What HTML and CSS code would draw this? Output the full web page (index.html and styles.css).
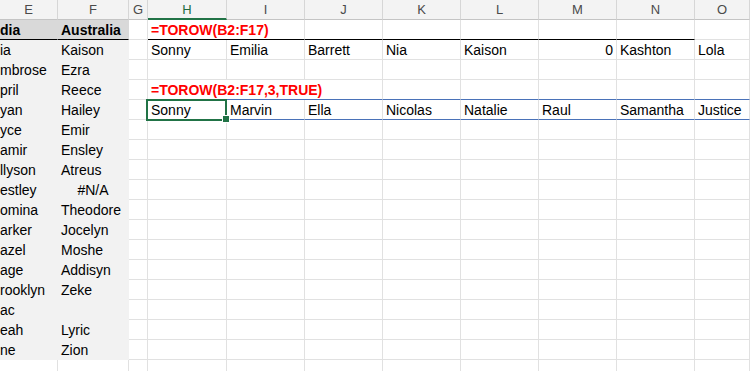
FILE: index.html
```html
<!DOCTYPE html>
<html lang="en">
<head>
<meta charset="utf-8">
<title>TOROW</title>
<link rel="stylesheet" href="styles.css">
</head>
<body>
<div class="sheet">
  <!-- column headers -->
  <div class="h">E</div><div class="h">F</div><div class="h">G</div><div class="h sel">H</div><div class="h">I</div><div class="h">J</div><div class="h">K</div><div class="h">L</div><div class="h">M</div><div class="h">N</div><div class="h">O</div>

  <!-- row 1 -->
  <div class="c t th e">dia</div><div class="c t th">Australia</div><div class="c"></div>
  <div class="c f bk span2">=TOROW(B2:F17)</div><div class="c bk"></div><div class="c bk"></div><div class="c bk"></div><div class="c bk"></div><div class="c bk"></div><div class="c"></div>

  <!-- row 2 -->
  <div class="c t e">ia</div><div class="c t">Kaison</div><div class="c"></div>
  <div class="c">Sonny</div><div class="c">Emilia</div><div class="c">Barrett</div><div class="c">Nia</div><div class="c">Kaison</div><div class="c num">0</div><div class="c">Kashton</div><div class="c">Lola</div>

  <!-- row 3 -->
  <div class="c t e">mbrose</div><div class="c t">Ezra</div><div class="c"></div>
  <div class="c"></div><div class="c"></div><div class="c"></div><div class="c"></div><div class="c"></div><div class="c"></div><div class="c"></div><div class="c"></div>

  <!-- row 4 -->
  <div class="c t e">pril</div><div class="c t">Reece</div><div class="c"></div>
  <div class="c f bl span3">=TOROW(B2:F17,3,TRUE)</div><div class="c bl"></div><div class="c bl"></div><div class="c bl"></div><div class="c bl"></div><div class="c bl"></div>

  <!-- row 5 -->
  <div class="c t e">yan</div><div class="c t">Hailey</div><div class="c"></div>
  <div class="c bl active">Sonny</div><div class="c bl">Marvin</div><div class="c bl">Ella</div><div class="c bl">Nicolas</div><div class="c bl">Natalie</div><div class="c bl">Raul</div><div class="c bl">Samantha</div><div class="c bl">Justice</div>

  <!-- row 6 -->
  <div class="c t e">yce</div><div class="c t">Emir</div><div class="c"></div>
  <div class="c"></div><div class="c"></div><div class="c"></div><div class="c"></div><div class="c"></div><div class="c"></div><div class="c"></div><div class="c"></div>

  <!-- row 7 -->
  <div class="c t e">amir</div><div class="c t">Ensley</div><div class="c"></div>
  <div class="c"></div><div class="c"></div><div class="c"></div><div class="c"></div><div class="c"></div><div class="c"></div><div class="c"></div><div class="c"></div>

  <!-- row 8 -->
  <div class="c t e">llyson</div><div class="c t">Atreus</div><div class="c"></div>
  <div class="c"></div><div class="c"></div><div class="c"></div><div class="c"></div><div class="c"></div><div class="c"></div><div class="c"></div><div class="c"></div>

  <!-- row 9 -->
  <div class="c t e">estley</div><div class="c t err">#N/A</div><div class="c"></div>
  <div class="c"></div><div class="c"></div><div class="c"></div><div class="c"></div><div class="c"></div><div class="c"></div><div class="c"></div><div class="c"></div>

  <!-- row 10 -->
  <div class="c t e">omina</div><div class="c t">Theodore</div><div class="c"></div>
  <div class="c"></div><div class="c"></div><div class="c"></div><div class="c"></div><div class="c"></div><div class="c"></div><div class="c"></div><div class="c"></div>

  <!-- row 11 -->
  <div class="c t e">arker</div><div class="c t">Jocelyn</div><div class="c"></div>
  <div class="c"></div><div class="c"></div><div class="c"></div><div class="c"></div><div class="c"></div><div class="c"></div><div class="c"></div><div class="c"></div>

  <!-- row 12 -->
  <div class="c t e">azel</div><div class="c t">Moshe</div><div class="c"></div>
  <div class="c"></div><div class="c"></div><div class="c"></div><div class="c"></div><div class="c"></div><div class="c"></div><div class="c"></div><div class="c"></div>

  <!-- row 13 -->
  <div class="c t e">age</div><div class="c t">Addisyn</div><div class="c"></div>
  <div class="c"></div><div class="c"></div><div class="c"></div><div class="c"></div><div class="c"></div><div class="c"></div><div class="c"></div><div class="c"></div>

  <!-- row 14 -->
  <div class="c t e">rooklyn</div><div class="c t">Zeke</div><div class="c"></div>
  <div class="c"></div><div class="c"></div><div class="c"></div><div class="c"></div><div class="c"></div><div class="c"></div><div class="c"></div><div class="c"></div>

  <!-- row 15 -->
  <div class="c t e">ac</div><div class="c t"></div><div class="c"></div>
  <div class="c"></div><div class="c"></div><div class="c"></div><div class="c"></div><div class="c"></div><div class="c"></div><div class="c"></div><div class="c"></div>

  <!-- row 16 -->
  <div class="c t e">eah</div><div class="c t">Lyric</div><div class="c"></div>
  <div class="c"></div><div class="c"></div><div class="c"></div><div class="c"></div><div class="c"></div><div class="c"></div><div class="c"></div><div class="c"></div>

  <!-- row 17 -->
  <div class="c t e">ne</div><div class="c t">Zion</div><div class="c"></div>
  <div class="c"></div><div class="c"></div><div class="c"></div><div class="c"></div><div class="c"></div><div class="c"></div><div class="c"></div><div class="c"></div>

  <!-- row 18 -->
  <div class="c"></div><div class="c"></div><div class="c"></div>
  <div class="c"></div><div class="c"></div><div class="c"></div><div class="c"></div><div class="c"></div><div class="c"></div><div class="c"></div><div class="c"></div>
</div>
</body>
</html>
```

FILE: styles.css
```css
* { box-sizing: border-box; }

html, body {
  margin: 0;
  padding: 0;
  background: #ffffff;
  overflow: hidden;
}

.sheet {
  display: grid;
  grid-template-columns: 58px 71px 19px 79px repeat(6, 78px) 1fr;
  grid-auto-rows: 20px;
  width: 750px;
  height: 371px;
  overflow: hidden;
  font-family: "Liberation Sans", Arial, sans-serif;
  font-size: 14px;
  color: #000;
}

/* column header strip */
.h {
  background: #f3f3f3;
  border-right: 1px solid #d6d6d6;
  border-bottom: 1px solid #c4c4c4;
  text-align: center;
  font-size: 13px;
  line-height: 19px;
  color: #4a4a4a;
}

.h.sel {
  color: #1e6b40;
  border-bottom: 2px solid #217346;
}

/* worksheet cells */
.c {
  position: relative;
  border-right: 1px solid #e1e1e1;
  border-bottom: 1px solid #e1e1e1;
  padding: 1px 3px 0;
  line-height: 18px;
  white-space: nowrap;
}

/* source table fill */
.t {
  background: #f2f2f2;
  border-color: #f2f2f2;
  overflow: hidden;
}

.t.th {
  background: #d9d9d9;
  border-right-color: #d9d9d9;
  border-bottom-color: #000;
  font-weight: bold;
}

.e {
  padding-left: 0;
}

.err { text-align: center; }
.num { text-align: right; }

/* formula text */
.f {
  color: #ff0000;
  font-weight: bold;
}

.span2 { grid-column: span 2; }
.span3 { grid-column: span 3; }

.bk { border-bottom-color: #000; }

/* spill range outline */
.bl { border-bottom-color: #4a72b8; }

/* active cell */
.active::after {
  content: "";
  position: absolute;
  left: -2px;
  top: -1px;
  right: -1px;
  bottom: -2px;
  border: 2px solid #217346;
  z-index: 2;
}

.active::before {
  content: "";
  position: absolute;
  right: -4px;
  bottom: -4px;
  width: 6px;
  height: 6px;
  background: #217346;
  border: 1px solid #ffffff;
  z-index: 3;
}
```
